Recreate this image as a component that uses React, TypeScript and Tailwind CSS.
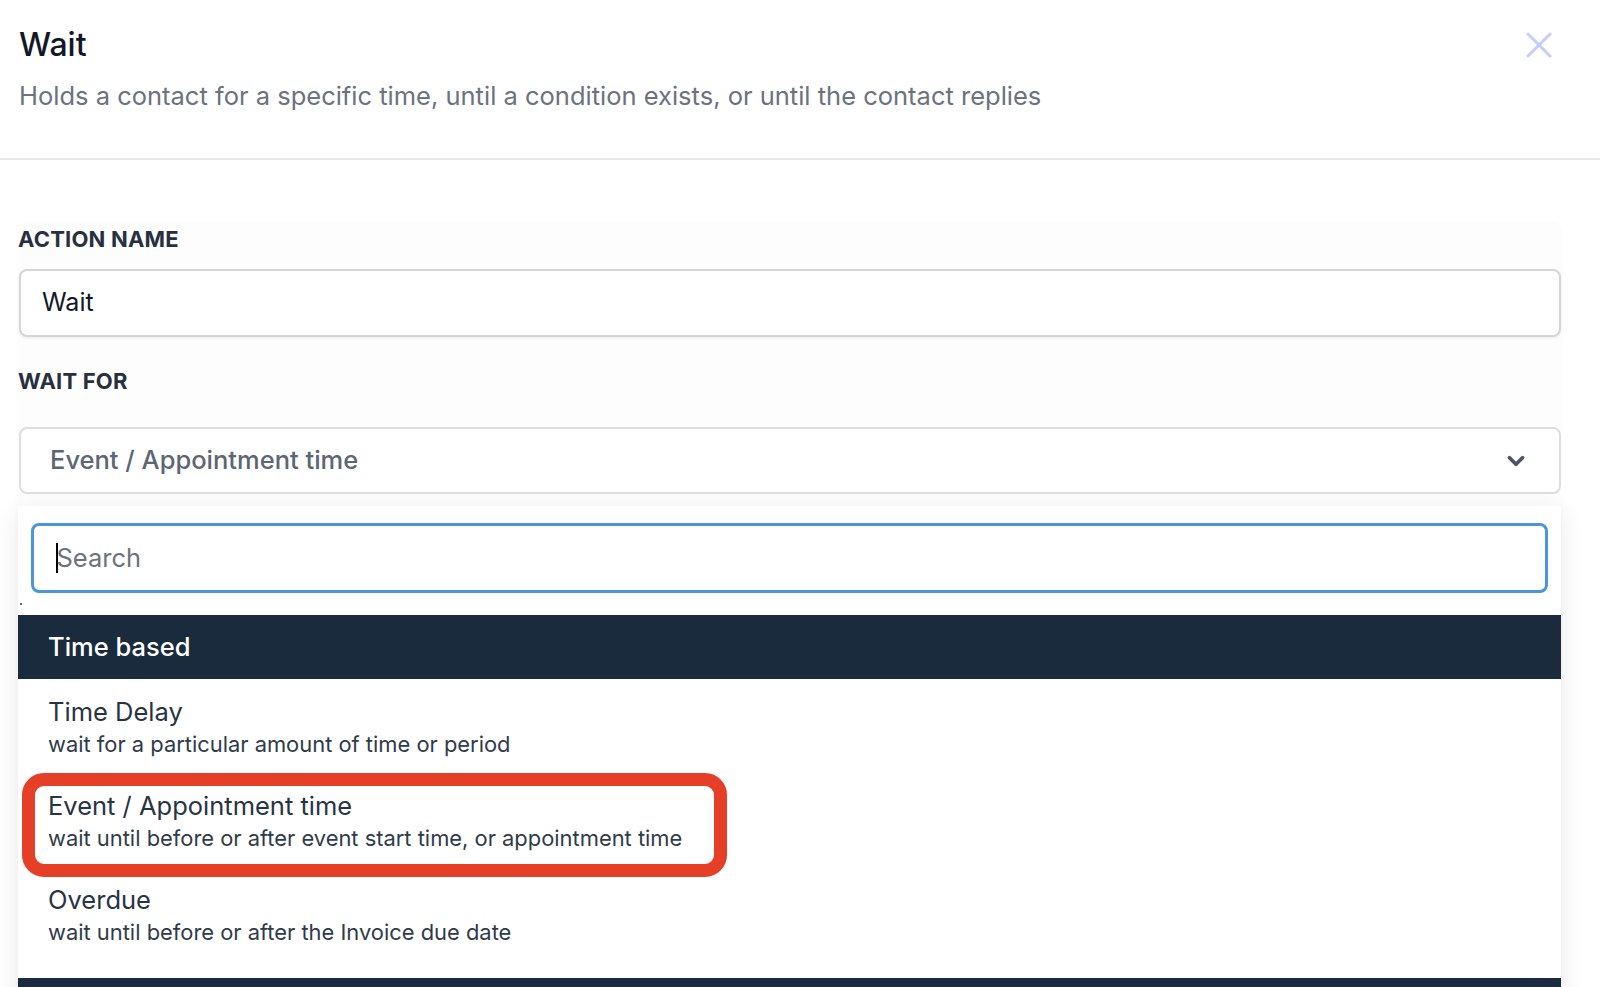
import React from 'react';
import { ChevronDown } from 'lucide-react';

interface WaitOption {
  title: string;
  description: string;
}

const timeBasedOptions: WaitOption[] = [
  { title: 'Time Delay', description: 'wait for a particular amount of time or period' },
  { title: 'Event / Appointment time', description: 'wait until before or after event start time, or appointment time' },
  { title: 'Overdue', description: 'wait until before or after the Invoice due date' },
];

const CloseIcon: React.FC = () => (
  <svg width="26" height="26" viewBox="0 0 26 26" fill="none">
    <path d="M2 2 L24 24 M24 2 L2 24" stroke="#c4cdfb" strokeWidth="3" strokeLinecap="round" />
  </svg>
);

const OptionRow: React.FC<{ option: WaitOption }> = ({ option }) => (
  <div className="pl-[30px] pr-6 pt-[17px] pb-[15px]">
    <div className="text-[25.5px] leading-[32px] text-[#273444]">{option.title}</div>
    <div className="mt-[2px] text-[21.9px] leading-[28px] text-[#2f3b4a]">{option.description}</div>
  </div>
);

const App: React.FC = () => {
  return (
    <div
      className="relative h-[987px] w-full overflow-hidden bg-white"
      style={{ fontFamily: 'Inter, "Noto Sans", sans-serif' }}
    >
      {/* header */}
      <div className="flex items-start justify-between border-b-2 border-[#e7e8ec] pl-[19px] pr-[48px] pt-[25px] pb-[46px]">
        <div>
          <h1 className="text-[32px] font-medium leading-[40px] text-[#111827]">Wait</h1>
          <p className="mt-[15px] text-[25.5px] leading-[32px] text-[#6b7280]">
            Holds a contact for a specific time, until a condition exists, or until the contact replies
          </p>
        </div>
        <button className="mt-[7px]">
          <CloseIcon />
        </button>
      </div>

      {/* form */}
      <div className="ml-[18px] mr-[39px] mt-[64px] rounded-lg bg-[#fdfdfd] shadow-[0_0_6px_rgba(0,0,0,0.025)]">
        <label className="block pt-[1px] text-[22px] font-bold leading-[28px] tracking-[0.2px] text-[#27303f]">
          ACTION NAME
        </label>
        <div className="mt-[16px] ml-[1px] flex h-[68px] items-center rounded-lg border-2 border-[#d4d6dc] bg-white pl-[21px] shadow-[0_1px_3px_rgba(0,0,0,0.08)]">
          <span className="text-[25px] text-[#111827]">Wait</span>
        </div>

        <label className="mt-[30px] block text-[22px] font-bold leading-[28px] tracking-[0.2px] text-[#27303f]">
          WAIT FOR
        </label>
        <div className="mt-[32px] ml-[1px] flex h-[67px] items-center justify-between rounded-lg border-2 border-[#dcdee3] bg-white pl-[29px] pr-[30px]">
          <span className="text-[25.5px] font-medium text-[#5c6675]">Event / Appointment time</span>
          <ChevronDown size={26} strokeWidth={3.5} className="text-[#4b5563]" />
        </div>

        {/* dropdown */}
        <div className="mt-[12px] bg-white shadow-[0_6px_24px_rgba(0,0,0,0.09)]">
          <div className="px-[13px] pt-[17px]">
            <div className="flex h-[70px] items-center rounded-lg border-[3px] border-[#4a95db] bg-white pl-[22px]">
              <span className="h-[30px] w-[1.5px] bg-black" />
              <span className="-ml-[1px] text-[25.5px] text-[#6b7280]">Search</span>
            </div>
          </div>
          <div className="flex h-[22px] items-center pl-[2px]">
            <span className="h-[2px] w-[2px] bg-[#666]" />
          </div>
          <div className="flex h-[64px] items-center bg-[#192b3c] pl-[30px]">
            <span className="text-[25.5px] font-medium text-white">Time based</span>
          </div>
          <div className="pb-[17px]">
            {timeBasedOptions.map((option) => (
              <OptionRow key={option.title} option={option} />
            ))}
          </div>
          <div className="h-[64px] bg-[#192b3c]" />
        </div>
      </div>

      {/* highlight annotation */}
      <div className="pointer-events-none absolute left-[22px] top-[773px] h-[104px] w-[705px] rounded-[22px] border-[13px] border-[#e63f27]" />
    </div>
  );
};

export default App;
